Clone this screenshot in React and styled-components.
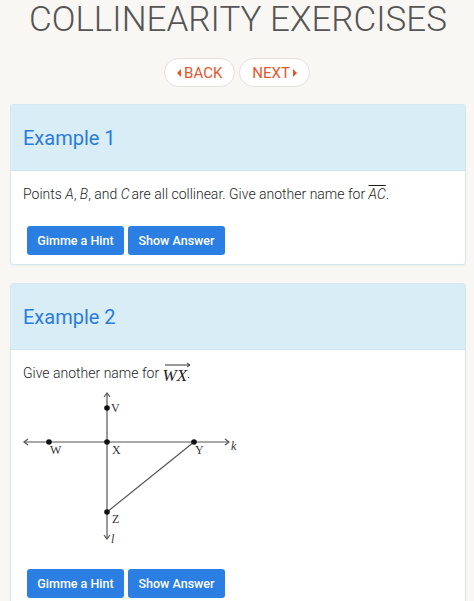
import styled, { createGlobalStyle } from 'styled-components'

const Global = createGlobalStyle`
    body {
        margin: 0;
        background: #f8f7f4;
        font-family: Roboto, "Liberation Sans", sans-serif;
    }
`
const Page = styled.div`
    padding: 0 8px 0 10px;
    overflow: hidden;
    height: 601px;
    box-sizing: border-box;
`
const Title = styled.h1`
    margin: 0;
    text-align: center;
    font-weight: 300;
    font-size: 35px;
    line-height: 40px;
    color: #555;
`
const Nav = styled.div`
    display: flex;
    justify-content: center;
    gap: 4px;
    margin-top: 18px;
    padding-right: 2px;
`
const NavButton = styled.button`
    display: flex;
    align-items: center;
    gap: 3px;
    height: 29px;
    padding: 0 12px;
    border: 1px solid #e2e0dc;
    border-radius: 15px;
    background: #fff;
    color: #e4572e;
    font-family: Roboto, "Liberation Sans", sans-serif;
    font-size: 15px;
`
const Tri = styled.span`
    width: 0;
    height: 0;
    border-top: 4px solid transparent;
    border-bottom: 4px solid transparent;
    ${({ dir }) => dir === 'left' ? 'border-right: 4px solid #e4572e;' : 'border-left: 4px solid #e4572e;'}
`
const Card = styled.div`
    margin-top: ${({ top }) => top}px;
    background: #fff;
    border: 1px solid #d3e7ef;
    border-radius: 3px;
    box-shadow: 0 1px 2px rgba(0, 0, 0, 0.04);
    overflow: hidden;
`
const CardHeader = styled.div`
    height: 66px;
    display: flex;
    align-items: center;
    padding: 0 12px;
    background: #d9edf7;
    border-bottom: 1px solid #cfe6f1;
    box-sizing: border-box;
    color: #2b7bd9;
    font-size: 20px;
`
const CardBody = styled.div`
    padding: 12px 12px 9px;
`
const Prompt = styled.p`
    margin: 0;
    font-size: 14px;
    font-weight: 300;
    line-height: 22px;
    height: 22px;
    color: #1e1e1e;
`
const Var = styled.i`
    font-style: italic;
    margin-right: ${({ gap }) => gap || 0}px;
`
const Over = styled.i`
    font-style: italic;
    text-decoration: overline;
`
const RayName = styled.span`
    position: relative;
    display: inline-block;
    font-family: "Liberation Serif", serif;
    font-style: italic;
    font-size: 17px;
    line-height: 16px;
    padding-top: 2px;
    vertical-align: -3px;
`
const RayArrow = styled.svg`
    position: absolute;
    left: 1px;
    top: -4px;
`
const Buttons = styled.div`
    display: flex;
    gap: 4px;
    margin: ${({ top }) => top}px 0 0 4px;
`
const Action = styled.button`
    width: 97px;
    height: 29px;
    border: none;
    border-radius: 3px;
    background: #2b7fe3;
    color: #fff;
    font-family: Roboto, "Liberation Sans", sans-serif;
    font-size: 12.5px;
    font-weight: 500;
    padding: 0;
`
const Diagram = styled.svg`
    display: block;
    margin: 5px 0 0 -3px;
    font-family: "Liberation Serif", serif;
    font-size: 12px;
`

const Figure = () => (
    <Diagram width="232" height="158" viewBox="0 0 232 158">
        <g stroke="#555" strokeWidth="1.2" fill="none">
            <line x1="4" y1="53" x2="209" y2="53" />
            <line x1="87" y1="4" x2="87" y2="150" />
            <line x1="87" y1="123" x2="174" y2="53" />
            <polyline points="8,50 4,53 8,56" />
            <polyline points="205,50 209,53 205,56" />
            <polyline points="84,8 87,4 90,8" />
            <polyline points="84,146 87,150 90,146" />
        </g>
        <g fill="#111">
            <circle cx="87" cy="19" r="2.8" />
            <circle cx="29" cy="53" r="2.8" />
            <circle cx="87" cy="53" r="2.8" />
            <circle cx="174" cy="53" r="2.8" />
            <circle cx="87" cy="123" r="2.8" />
        </g>
        <g fill="#333">
            <text x="91" y="23">V</text>
            <text x="30" y="65">W</text>
            <text x="92" y="65">X</text>
            <text x="175" y="65">Y</text>
            <text x="92" y="134">Z</text>
            <text x="211" y="61" fontStyle="italic">k</text>
            <text x="91" y="154" fontStyle="italic">l</text>
        </g>
    </Diagram>
)

export default function App() {
    return (
        <Page>
            <Global />
            <Title>COLLINEARITY EXERCISES</Title>
            <Nav>
                <NavButton><Tri dir="left" />BACK</NavButton>
                <NavButton>NEXT<Tri dir="right" /></NavButton>
            </Nav>
            <Card top={17}>
                <CardHeader>Example 1</CardHeader>
                <CardBody>
                    <Prompt>
                        Points <Var>A</Var>, <Var>B</Var>, and <Var gap={2}>C</Var>are all collinear. Give another name for <Over>AC</Over>.
                    </Prompt>
                    <Buttons top={21}>
                        <Action>Gimme a Hint</Action>
                        <Action>Show Answer</Action>
                    </Buttons>
                </CardBody>
            </Card>
            <Card top={18}>
                <CardHeader>Example 2</CardHeader>
                <CardBody>
                    <Prompt>
                        Give another name for{' '}
                        <RayName>
                            <RayArrow width="28" height="6" viewBox="0 0 28 6">
                                <line x1="1" y1="3" x2="26" y2="3" stroke="#333" strokeWidth="1" />
                                <polyline points="23,1 26,3 23,5" stroke="#333" strokeWidth="1" fill="none" />
                            </RayArrow>
                            WX
                        </RayName>.
                    </Prompt>
                    <Figure />
                    <Buttons top={22}>
                        <Action>Gimme a Hint</Action>
                        <Action>Show Answer</Action>
                    </Buttons>
                </CardBody>
            </Card>
        </Page>
    )
}
